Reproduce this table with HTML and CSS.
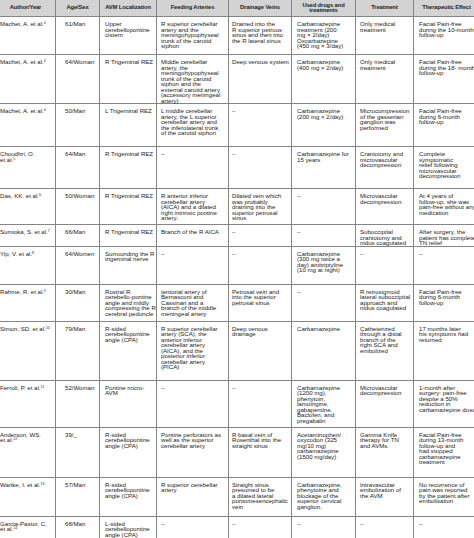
FILE: index.html
```html
<!DOCTYPE html>
<html>
<head>
<meta charset="utf-8">
<link rel="stylesheet" href="styles.css">
</head>
<body>
<table class="t">
<colgroup>
<col class="w-auth"><col class="w-age"><col class="w-avm"><col class="w-feed"><col class="w-drain"><col class="w-drug"><col class="w-treat"><col class="w-eff">
</colgroup>
<thead>
<tr class="r0">
<th>Author/Year</th><th>Age/Sex</th><th>AVM Localization</th><th>Feeding Arteries</th><th>Drainage Veins</th><th>Used drugs and<br>treatments</th><th>Treatment</th><th>Therapeutic Effect</th>
</tr>
</thead>
<tbody>
<tr class="r1">
<td>Machet, A. et al.<span class="ref">4</span></td><td>61/Man</td><td>Upper<br>cerebellopontine<br>cistern</td><td>R superior cerebellar<br>artery and the<br>meningohypophyseal<br>trunk of the carotid<br>siphon</td><td>Drained into the<br>R superior petrous<br>sinus and then into<br>the R lateral sinus</td><td>Carbamazepine<br>treatment (200<br>mg × 2/day)<br>Oxcarbazepine<br>(450 mg × 3/day)</td><td>Only medical<br>treatment</td><td>Facial Pain-free<br>during the 10-month<br>follow-up</td>
</tr>
<tr class="r2">
<td>Machet, A. et al.<span class="ref">4</span></td><td>64/Woman</td><td>R Trigeminal REZ</td><td>Middle cerebellar<br>artery, the<br>meningohypophyseal<br>trunk of the carotid<br>siphon and the<br>external carotid artery<br>(accessory meningeal<br>artery)</td><td>Deep venous system</td><td>Carbamazepine<br>(400 mg × 2/day)</td><td>Only medical<br>treatment</td><td>Facial Pain-free<br>during the 18- month<br>follow-up</td>
</tr>
<tr class="r3">
<td>Machet, A. et al.<span class="ref">4</span></td><td>50/Man</td><td>L Trigeminal REZ</td><td>L middle cerebellar<br>artery, the L superior<br>cerebellar artery and<br>the inferolateral trunk<br>of the carotid siphon</td><td>–</td><td>Carbamazepine<br>(200 mg × 2/day)</td><td>Microcompression<br>of the gasserian<br>ganglion was<br>performed</td><td>Facial Pain-free<br>during 6-month<br>follow-up</td>
</tr>
<tr class="r4">
<td>Choudhri, O.<br>et al.<span class="ref">5</span></td><td>64/Man</td><td>R Trigeminal REZ</td><td>–</td><td>–</td><td>Carbamazepine for<br>15 years</td><td>Craniotomy and<br>microvascular<br>decompression</td><td>Complete<br>symptomatic<br>relief following<br>microvascular<br>decompression</td>
</tr>
<tr class="r5">
<td>Das, KK. et al.<span class="ref">6</span></td><td>50/Woman</td><td>R Trigeminal REZ</td><td>R anterior inferior<br>cerebellar artery<br>(AICA) and a dilated<br>right intrinsic pontine<br>artery.</td><td>Dilated vein which<br>was probably<br>draining into the<br>superior petrosal<br>sinus</td><td>–</td><td>Microvascular<br>decompression</td><td>At 4 years of<br>follow-up, she was<br>pain-free without any<br>medication</td>
</tr>
<tr class="r6">
<td>Sumioka, S. et al.<span class="ref">7</span></td><td>66/Man</td><td>R Trigeminal REZ</td><td>Branch of the R AICA</td><td>–</td><td>–</td><td>Suboccipital<br>craniotomy and<br>nidus coagulated</td><td>After surgery, the<br>patient has complete<br>TN relief</td>
</tr>
<tr class="r7">
<td>Yip, V. et al.<span class="ref">8</span></td><td>64/Women</td><td>Surrounding the R<br>trigeminal nerve</td><td>–</td><td>–</td><td>Carbamazepine<br>(300 mg twice a<br>day) amitriptyline<br>(10 mg at night)</td><td>–</td><td>–</td>
</tr>
<tr class="r8">
<td>Rahme, R. et al.<span class="ref">9</span></td><td>30/Man</td><td>Rostral R<br>cerebello-pontine<br>angle and mildly<br>compressing the R<br>cerebral peduncle</td><td>tentorial artery of<br>Bernasconi and<br>Cassinari and a<br>branch of the middle<br>meningeal artery</td><td>Petrosal vein and<br>into the superior<br>petrosal sinus</td><td>–</td><td>R retrosigmoid<br>lateral suboccipital<br>approach and<br>nidus coagulated</td><td>Facial Pain-free<br>during 6-month<br>follow-up</td>
</tr>
<tr class="r9">
<td>Simon, SD. et al.<span class="ref">10</span></td><td>79/Man</td><td>R-sided<br>cerebellopontine<br>angle (CPA)</td><td>R superior cerebellar<br>artery (SCA), the<br>anterior inferior<br>cerebellar artery<br>(AICA), and the<br>posterior inferior<br>cerebellar artery<br>(PICA)</td><td>Deep venous<br>drainage</td><td>Carbamazepine</td><td>Catheterized<br>through a distal<br>branch of the<br>right SCA and<br>embolized</td><td>17 months later<br>his symptoms had<br>returned</td>
</tr>
<tr class="r10">
<td>Ferroli, P. et al.<span class="ref">11</span></td><td>52/Woman</td><td>Pontine micro-<br>AVM</td><td>–</td><td>–</td><td>Carbamazepine<br>(1200 mg),<br>phenytoin,<br>lamotrigine,<br>gabapentine,<br>Baclofen, and<br>pregabalin</td><td>Microvascular<br>decompression</td><td>1-month after<br>surgery: pain-free<br>despite a 50%<br>reduction in<br>carbamazepine dosage</td>
</tr>
<tr class="r11">
<td>Anderson, WS.<br>et al.<span class="ref">12</span></td><td>39/_</td><td>R-sided<br>cerebellopontine<br>angle (CPA)</td><td>Pontine perforators as<br>well as the superior<br>cerebellar artery</td><td>R basal vein of<br>Rosenthal into the<br>straight sinus</td><td>Acetaminophen/<br>oxycodon (325<br>mg/10 mg)<br>carbamazepine<br>(1500 mg/day)</td><td>Gamma Knife<br>therapy for TN<br>and AVMs.</td><td>Facial Pain-free<br>during 13-month<br>follow-up and<br>had stopped<br>carbamazepine<br>treatment</td>
</tr>
<tr class="r12">
<td>Wanke, I. et al.<span class="ref">13</span></td><td>57/Man</td><td>R-sided<br>cerebellopontine<br>angle (CPA)</td><td>R superior cerebellar<br>artery</td><td>Straight sinus<br>presumed to be<br>a dilated lateral<br>pontomesencephalic<br>vein</td><td>Carbamazepine,<br>phenytoine and<br>blockage of the<br>superior cervical<br>ganglion.</td><td>Intravascular<br>embolization of<br>the AVM</td><td>No recurrence of<br>pain was reported<br>by the patient after<br>embolisation</td>
</tr>
<tr class="r13">
<td>Garcia-Pastor, C.<br>et al.<span class="ref">14</span></td><td>68/Man</td><td>L-sided<br>cerebellopontine<br>angle (CPA)</td><td>–</td><td>–</td><td>–</td><td>–</td><td>–</td>
</tr>
</tbody>
</table>
</body>
</html>
```

FILE: styles.css
```css
html, body {
  margin: 0;
  padding: 0;
  background: #ffffff;
  overflow: hidden;
}
body {
  width: 474px;
  height: 538px;
  font-family: "Liberation Sans", Arial, sans-serif;
  color: #1c1c1c;
}
.t {
  table-layout: fixed;
  border-collapse: collapse;
  margin-left: -5px;
  margin-top: -1px;
  width: 484px;
  font-size: 6.1px;
  line-height: 5.5px;
}
.w-auth { width: 60px; }
.w-age { width: 44px; }
.w-avm { width: 57px; }
.w-feed { width: 72px; }
.w-drain { width: 63px; }
.w-drug { width: 64px; }
.w-treat { width: 58px; }
.w-eff { width: 66px; }

.t th, .t td {
  border: 1px solid #858585;
  padding: 4px 1px 0 4px;
  vertical-align: top;
  text-align: left;
  white-space: nowrap;
  overflow: visible;
}
.t th {
  background: #d3d3d3;
  font-weight: bold;
  font-size: 5.8px;
  letter-spacing: -0.12px;
  text-align: center;
  vertical-align: middle;
  padding: 0 1px;
  color: #1e1e1e;
}
.t td:nth-child(2) { padding-left: 9px; }
.t td:nth-child(3) { padding-left: 5px; }
.t td:nth-child(5) { padding-left: 3px; }
.t td:nth-child(6) { padding-left: 5px; }
.t td:nth-child(8) { padding-left: 5px; }

.ref {
  font-size: 3.6px;
  vertical-align: 2px;
  line-height: 0;
}

.r0 { height: 17px; }
.r1 { height: 38px; }
.r2 { height: 48px; }
.r3 { height: 43px; }
.r4 { height: 42px; }
.r5 { height: 36px; }
.r6 { height: 21px; }
.r7 { height: 38px; }
.r8 { height: 37px; }
.r9 { height: 59px; }
.r10 { height: 47px; }
.r11 { height: 50px; }
.r12 { height: 39px; }
.r13 { height: 40px; }
```
